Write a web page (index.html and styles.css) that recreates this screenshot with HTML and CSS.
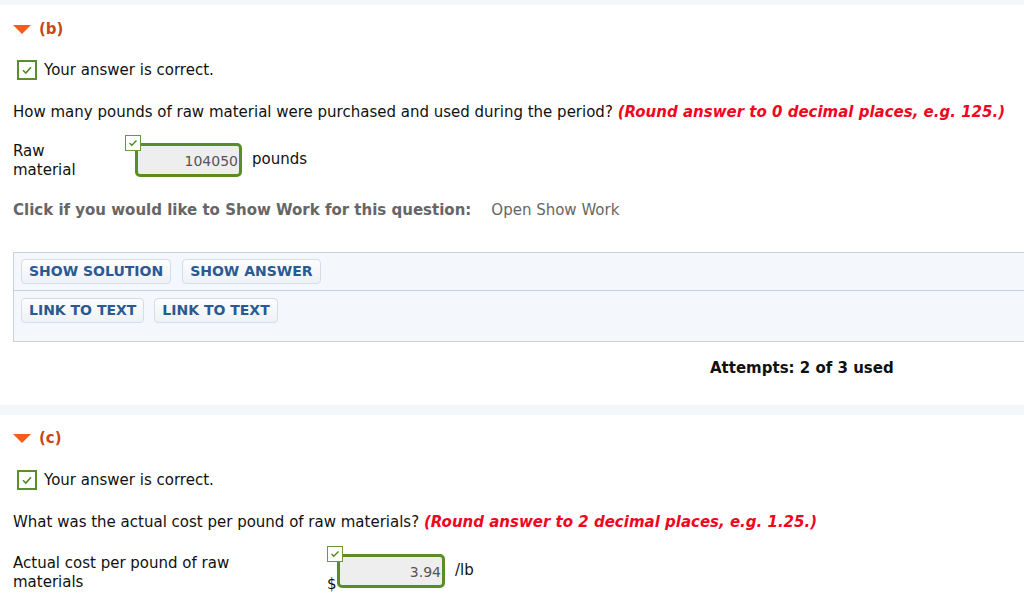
FILE: index.html
```html
<!DOCTYPE html>
<html>
<head>
<meta charset="utf-8">
<link rel="stylesheet" href="styles.css">
</head>
<body>
<div class="strip strip-top"></div>
<div class="part">
  <div class="part-head"><span class="tri"></span><span class="part-label">(b)</span></div>
  <div class="correct"><span class="cbox"><svg width="12" height="10" viewBox="0 0 12 10"><path d="M2 5.2 L4.8 8 L10 2.2" fill="none" stroke="#4f8a1e" stroke-width="1.6"/></svg></span><span>Your answer is correct.</span></div>
  <p class="question">How many pounds of raw material were purchased and used during the period? <em class="hint">(Round answer to 0 decimal places, e.g. 125.)</em></p>
  <div class="answer-row row-b">
    <div class="label label-b">Raw<br>material</div>
    <div class="field field-b">
      <span class="mini"><svg width="10" height="8" viewBox="0 0 10 8"><path d="M1.5 4 L3.8 6.2 L8.5 1.5" fill="none" stroke="#4f8a1e" stroke-width="1.4"/></svg></span>
      <span class="input">104050</span>
    </div>
    <span class="unit">pounds</span>
  </div>
  <div class="showwork"><b>Click if you would like to Show Work for this question:</b><span class="open">Open Show Work</span></div>
  <div class="panel">
    <div class="panel-row"><span class="btn">SHOW SOLUTION</span><span class="btn">SHOW ANSWER</span></div>
    <div class="panel-row panel-row2"><span class="btn">LINK TO TEXT</span><span class="btn">LINK TO TEXT</span></div>
  </div>
  <div class="attempts">Attempts: 2 of 3 used</div>
</div>
<div class="strip strip-mid"></div>
<div class="part">
  <div class="part-head"><span class="tri"></span><span class="part-label">(c)</span></div>
  <div class="correct"><span class="cbox"><svg width="12" height="10" viewBox="0 0 12 10"><path d="M2 5.2 L4.8 8 L10 2.2" fill="none" stroke="#4f8a1e" stroke-width="1.6"/></svg></span><span>Your answer is correct.</span></div>
  <p class="question">What was the actual cost per pound of raw materials? <em class="hint">(Round answer to 2 decimal places, e.g. 1.25.)</em></p>
  <div class="answer-row row-c">
    <div class="label label-c">Actual cost per pound of raw<br>materials</div>
    <span class="dollar">$</span>
    <div class="field field-c">
      <span class="mini"><svg width="10" height="8" viewBox="0 0 10 8"><path d="M1.5 4 L3.8 6.2 L8.5 1.5" fill="none" stroke="#4f8a1e" stroke-width="1.4"/></svg></span>
      <span class="input">3.94</span>
    </div>
    <span class="unit">/lb</span>
  </div>
</div>
</body>
</html>
```
FILE: styles.css
```css
html, body {
  margin: 0;
  padding: 0;
  background: #fff;
}
body {
  font-family: "DejaVu Sans", Verdana, sans-serif;
  font-size: 15px;
  color: #111;
  width: 1024px;
  overflow: hidden;
}
.strip {
  background: #f4f7fa;
}
.strip-top { height: 5px; }
.strip-mid { height: 10px; margin-top: 26px; }
.part {
  padding-left: 13px;
}
.part-head {
  display: flex;
  align-items: center;
  height: 18px;
  margin-top: 15px;
}
.strip-mid + .part .part-head { margin-top: 14px; }
.tri {
  width: 0;
  height: 0;
  border-left: 9px solid transparent;
  border-right: 9px solid transparent;
  border-top: 9px solid #fa5a1e;
  margin-right: 8px;
  margin-top: 1px;
}
.part-label {
  color: #c8471c;
  font-weight: bold;
  font-size: 15px;
}
.correct {
  display: flex;
  align-items: center;
  margin-top: 22px;
  margin-left: 4px;
  height: 20px;
}
.cbox {
  box-sizing: border-box;
  width: 20px;
  height: 20px;
  border: 2px solid #5a8f2a;
  display: flex;
  align-items: center;
  justify-content: center;
  margin-right: 7px;
  background: #fff;
}
.strip-mid + .part .correct { margin-top: 23px; }
.question {
  margin: 22px 0 0 0;
  line-height: 20px;
}
.hint {
  color: #f0061e;
  font-weight: bold;
}
.answer-row {
  display: flex;
  align-items: flex-start;
}
.row-b { margin-top: 19px; }
.row-c { margin-top: 21px; }
.label {
  line-height: 19px;
}
.label-b { width: 122px; margin-top: 1px; }
.label-c { width: 314px; margin-top: 1px; }
.field {
  position: relative;
}
.field-b { margin-top: 2px; }
.field-c { margin-top: 1px; }
.mini {
  position: absolute;
  left: -10px;
  top: -8px;
  box-sizing: border-box;
  width: 16px;
  height: 16px;
  border: 1px solid #6a9a35;
  background: #fff;
  display: flex;
  align-items: center;
  justify-content: center;
}
.input {
  display: block;
  box-sizing: border-box;
  height: 34px;
  border: 3px solid #5b8e22;
  border-radius: 5px;
  background: #eeeeee;
  color: #555;
  text-align: right;
  padding: 7px 1px 0 0;
  font-size: 14px;
}
.field-b .input { width: 107px; }
.field-c .input { width: 108px; }
.unit {
  margin-left: 10px;
}
.row-b .unit { margin-top: 9px; }
.row-c .unit { margin-top: 8px; }
.dollar {
  margin-top: 22px;
  width: 10px;
}
.showwork {
  margin-top: 20px;
  color: #666;
  display: flex;
  height: 20px;
  align-items: center;
}
.showwork b { color: #666; }
.open {
  margin-left: 20px;
  color: #666;
}
.panel {
  margin-top: 32px;
  background: #f4f7fb;
  border: 1px solid #c7d1de;
  border-right: none;
  height: 90px;
  box-sizing: border-box;
}
.panel-row {
  display: flex;
  gap: 11px;
  padding: 6px 0 6px 7px;
  border-bottom: 1px solid #c7d1de;
}
.panel-row2 {
  gap: 10px;
  border-bottom: none;
  padding-top: 7px;
}
.btn {
  display: inline-block;
  box-sizing: border-box;
  height: 25px;
  line-height: 23px;
  padding: 0 7px;
  border: 1px solid #d5dde6;
  border-radius: 4px;
  background: linear-gradient(#fdfdfe, #eef2f6);
  color: #2a5993;
  font-weight: bold;
  font-size: 14px;
}
.attempts {
  margin-top: 17px;
  margin-left: 697px;
  font-weight: bold;
  height: 20px;
}
```
